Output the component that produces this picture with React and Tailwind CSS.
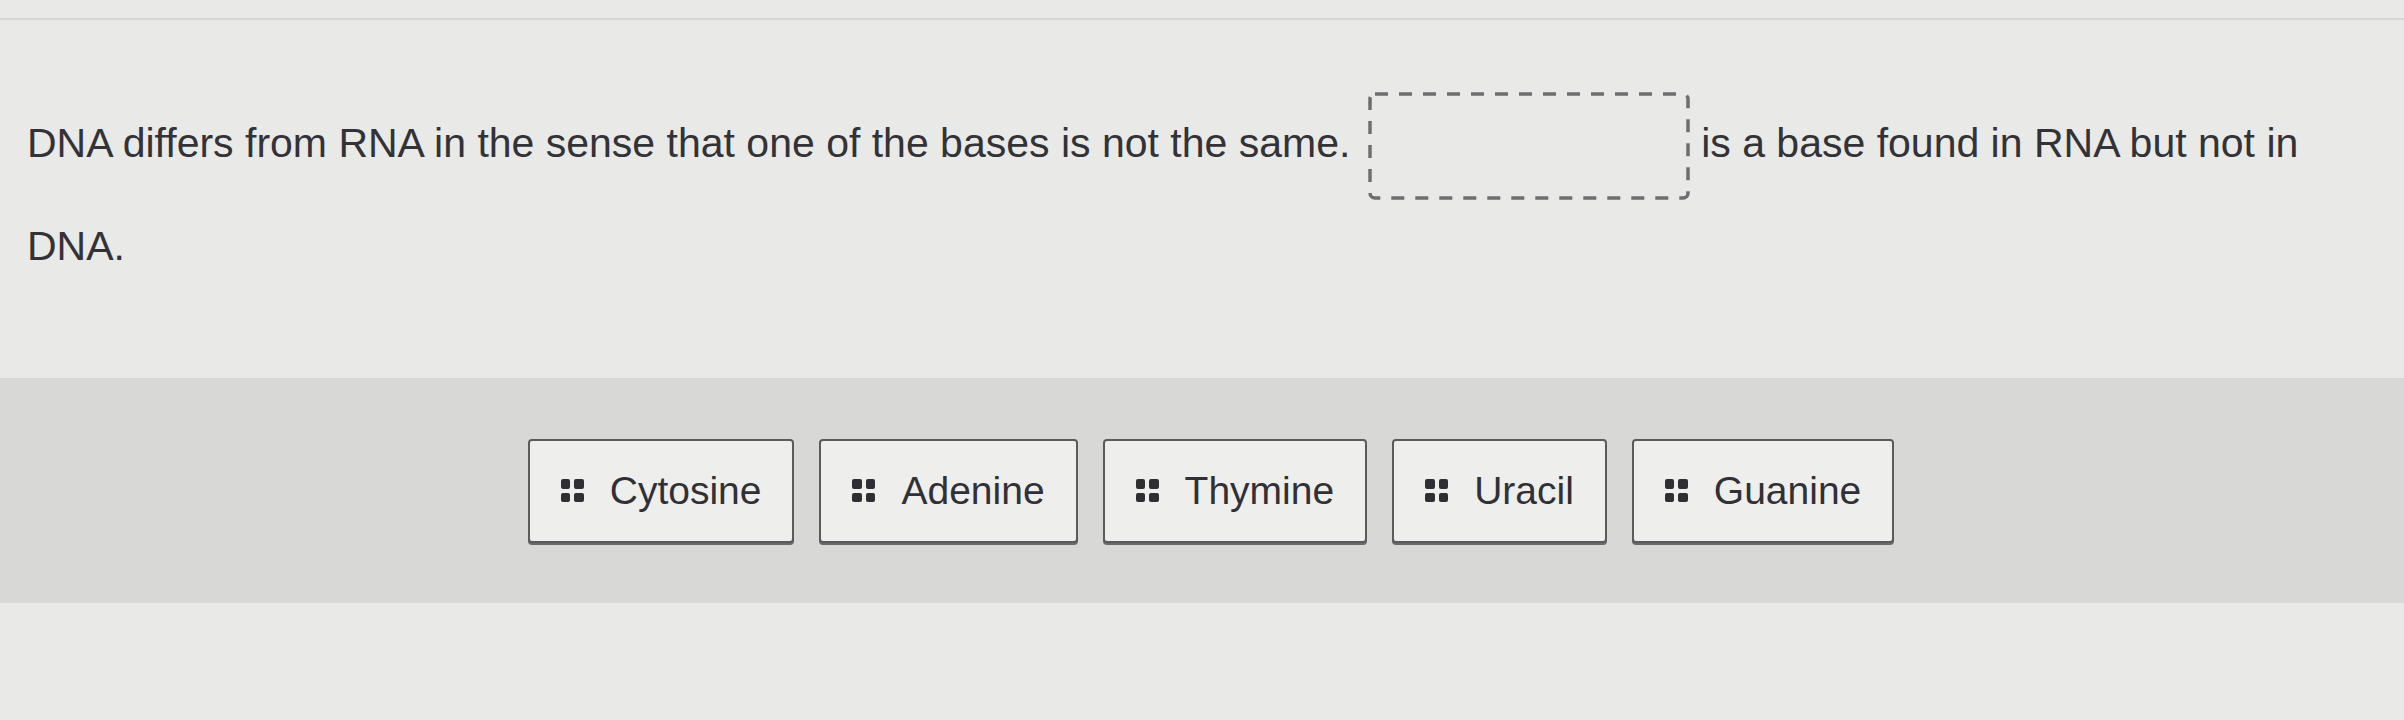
import { useState } from "react";

const bases = ["Cytosine", "Adenine", "Thymine", "Uracil", "Guanine"];

// four-dot drag handle shown at the left of each choice
function Grip() {
  return (
    <span className="grid grid-cols-2 gap-[4px] w-[23px] shrink-0">
      <span className="w-[9.5px] h-[9.5px] rounded-[2px] bg-[#2f2f33]" />
      <span className="w-[9.5px] h-[9.5px] rounded-[2px] bg-[#2f2f33]" />
      <span className="w-[9.5px] h-[9.5px] rounded-[2px] bg-[#2f2f33]" />
      <span className="w-[9.5px] h-[9.5px] rounded-[2px] bg-[#2f2f33]" />
    </span>
  );
}

function Choice({ label, onPick }) {
  return (
    <button
      type="button"
      onClick={() => onPick(label)}
      className="flex items-center gap-[26px] h-[104px] px-[31px] bg-[#eeeeec] border-2 border-[#5b5b5e] rounded-[4px] shadow-[0_2px_0_#6a6a6d] text-[39px] text-[#303036] leading-none"
    >
      <Grip />
      <span>{label}</span>
    </button>
  );
}

// empty drop target with long dashes
function DropZone({ value }) {
  return (
    <span className="relative inline-block align-middle w-[322px] h-[108px] my-[16px] ml-[6px] text-center leading-[108px]">
      <svg className="absolute inset-0" width="322" height="108" viewBox="0 0 322 108">
        <rect
          x="2"
          y="2"
          width="318"
          height="104"
          rx="5"
          fill="none"
          stroke="#6e6e70"
          strokeWidth="3.5"
          strokeDasharray="13 11"
        />
      </svg>
      {value}
    </span>
  );
}

export default function App() {
  const [answer, setAnswer] = useState(null);

  return (
    <div className="min-h-[720px] w-full bg-[#e9e9e7] font-['Liberation_Sans',Arial,sans-serif] text-[#323237]">
      <div className="h-[20px] border-b-2 border-[#d6d6d4]" />

      <div className="px-[27px] pt-[56px]">
        <p className="text-[41px] leading-[60px]">
          DNA differs from RNA in the sense that one of the bases is not the same.{" "}
          <DropZone value={answer} /> is a base found in RNA but not in
          <br />
          DNA.
        </p>
      </div>

      <div className="mt-[102px] h-[225px] pl-[18px] bg-[#d8d8d6] flex items-center justify-center gap-[25px]">
        {bases.map((b) => (
          <Choice key={b} label={b} onPick={setAnswer} />
        ))}
      </div>
    </div>
  );
}
